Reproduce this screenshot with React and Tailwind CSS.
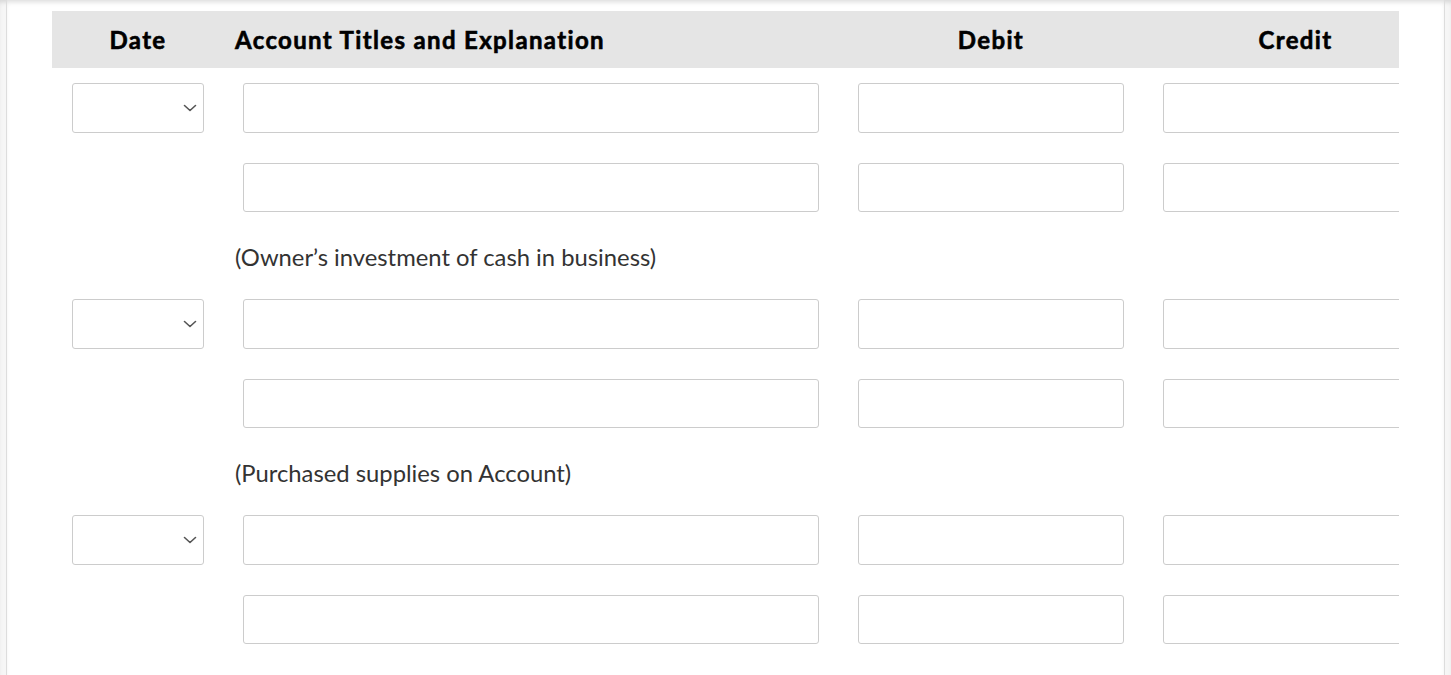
import React from "react";

function Chevron() {
  return (
    <svg width="14" height="8" viewBox="0 0 14 8" className="absolute right-[6px] top-1/2 -translate-y-1/2">
      <path d="M1.5 1.5 L7 6.5 L12.5 1.5" fill="none" stroke="#555" strokeWidth="1.6" strokeLinecap="round" strokeLinejoin="round" />
    </svg>
  );
}

function Field({ h = "h-[50px]" }) {
  return <div className={h + " border border-[#cccccc] rounded-[3px] bg-white"} />;
}

const COLS = "grid grid-cols-[172px_615px_304px_305px]";

function Row({ withDate, className = "", h = "h-[50px]" }) {
  return (
    <div className={COLS + " " + className}>
      <div className="px-[20px]">
        {withDate && (
          <div className="relative h-[50px] border border-[#cccccc] rounded-[3px] bg-white">
            <Chevron />
          </div>
        )}
      </div>
      <div className="pl-[19px] pr-[20px]"><Field h={h} /></div>
      <div className="pl-[19px] pr-[19px]"><Field h={h} /></div>
      <div className="px-[20px]"><Field h={h} /></div>
    </div>
  );
}

function Entry({ label, first }) {
  return (
    <div className={first ? "pt-[15px]" : "pt-[27px]"}>
      <Row withDate />
      <div className="pt-[30px]">
        <Row h="h-[49px]" />
      </div>
      {label && (
        <div className="mt-[30px] pl-[183px] h-[30px] leading-[30px] text-[23.8px] text-[#333333]">{label}</div>
      )}
    </div>
  );
}

export default function App() {
  return (
    <div
      className="w-[1451px] h-[675px] flex bg-[#f6f6f6] overflow-hidden shadow-[inset_0_4px_5px_-2px_rgba(0,0,0,0.14)]"
      style={{ fontFamily: "Lato, 'Open Sans', sans-serif" }}
    >
      <div className="w-[6px] shrink-0" />
      <div className="w-[1439px] shrink-0 h-full bg-white border-l border-r border-[#dddddd] shadow-[inset_0_4px_5px_-2px_rgba(0,0,0,0.14)]">
        <div className="ml-[45px] w-[1347px] overflow-hidden pt-[11px]">
          <div className="grid grid-cols-[172px_615px_304px_305px] h-[57px] bg-[#e5e5e5] items-center text-[24px] font-bold tracking-[1.35px] text-black [-webkit-text-stroke:0.6px_black]">
            <div className="text-center">Date</div>
            <div className="pl-[11px]">Account Titles and Explanation</div>
            <div className="text-center">Debit</div>
            <div className="text-center">Credit</div>
          </div>
          <Entry first label="(Owner’s investment of cash in business)" />
          <Entry label="(Purchased supplies on Account)" />
          <Entry />
        </div>
      </div>
    </div>
  );
}
